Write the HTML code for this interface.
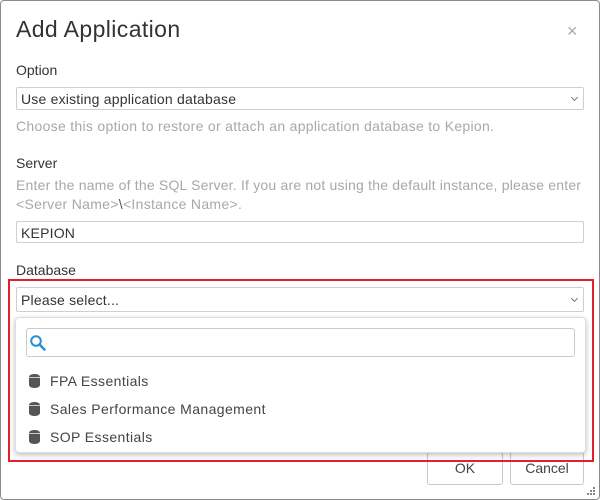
<!DOCTYPE html>
<html><head><style>
*{box-sizing:border-box;margin:0;padding:0}
body{width:600px;height:500px;background:#fff;font-family:"Liberation Sans",sans-serif;position:relative;overflow:hidden;color:#333}
.abs{position:absolute}
.dlg{left:0;top:0;width:600px;height:500px;border:1px solid #8a8a8a;border-radius:4px}
.lbl{font-size:14px;color:#333;left:16px}
.help{font-size:14px;letter-spacing:.3px;color:#a8a8a8;left:16px;white-space:nowrap}
.inp{left:16px;width:568px;height:23px;border:1px solid #cfcfcf;border-radius:2px;font-size:14px;letter-spacing:.2px;padding:3px 0 0 4px;color:#333}
.chev{right:6px;top:7px;width:5px;height:5px;border-right:1px solid #777;border-bottom:1px solid #777;transform:rotate(45deg)}
.item{left:50px;font-size:14px;letter-spacing:.4px;color:#444}
.db{left:29px;width:11px;height:14px;background:#555;border-radius:5px/3px}
.db:after{content:"";position:absolute;left:0;top:3px;width:11px;height:1px;background:#ccc}
.btn{top:452px;height:33px;border:1px solid #c8c8c8;border-radius:3px;font-size:14px;color:#444;text-align:center;line-height:30px}
</style></head><body>
<div class="abs dlg"></div>
<div class="abs" style="left:16px;top:16px;font-size:23px;letter-spacing:.4px;color:#333">Add Application</div>
<div class="abs" style="left:567px;top:21px;font-size:18px;color:#aaa">×</div>
<div class="abs lbl" style="top:62px">Option</div>
<div class="abs inp" style="top:87px">Use existing application database<div class="abs chev"></div></div>
<div class="abs help" style="top:118px">Choose this option to restore or attach an application database to Kepion.</div>
<div class="abs lbl" style="top:155px">Server</div>
<div class="abs help" style="top:177px;letter-spacing:.2px">Enter the name of the SQL Server. If you are not using the default instance, please enter</div>
<div class="abs help" style="top:196px">&lt;Server Name&gt;<span style="color:#555">\</span>&lt;Instance Name&gt;.</div>
<div class="abs inp" style="top:221px;height:22px">KEPION</div>
<div class="abs lbl" style="top:262px">Database</div>
<div class="abs btn" style="left:427px;width:76px">OK</div>
<div class="abs btn" style="left:510px;width:74px">Cancel</div>
<div class="abs inp" style="top:287px;height:25px;padding-top:4px">Please select...<div class="abs chev" style="top:8px"></div></div>
<div class="abs" style="left:15px;top:317px;width:571px;height:136px;background:#fff;border:1px solid #ddd;border-radius:4px;box-shadow:0 2px 6px rgba(0,0,0,.25)"></div>
<div class="abs" style="left:26px;top:328px;width:549px;height:29px;border:1px solid #ccc;border-radius:3px"></div>
<svg class="abs" style="left:29px;top:334px" width="18" height="18" viewBox="0 0 18 18"><circle cx="7" cy="7" r="4.8" fill="none" stroke="#2a8fd6" stroke-width="2"/><path d="M10.5 10.5L15.5 15.5" stroke="#2a8fd6" stroke-width="2.6" stroke-linecap="round"/></svg>
<div class="abs db" style="top:374px"></div><div class="abs item" style="top:373px">FPA Essentials</div>
<div class="abs db" style="top:402px"></div><div class="abs item" style="top:401px">Sales Performance Management</div>
<div class="abs db" style="top:430px"></div><div class="abs item" style="top:429px">SOP Essentials</div>
<div class="abs" style="left:8px;top:279px;width:586px;height:183px;border:2px solid #e3202b"></div>
<svg class="abs" style="left:585px;top:485px" width="12" height="12"><g fill="#888"><rect x="8" y="2" width="2" height="2"/><rect x="5" y="5" width="2" height="2"/><rect x="8" y="5" width="2" height="2"/><rect x="2" y="8" width="2" height="2"/><rect x="5" y="8" width="2" height="2"/><rect x="8" y="8" width="2" height="2"/></g></svg>
</body></html>
